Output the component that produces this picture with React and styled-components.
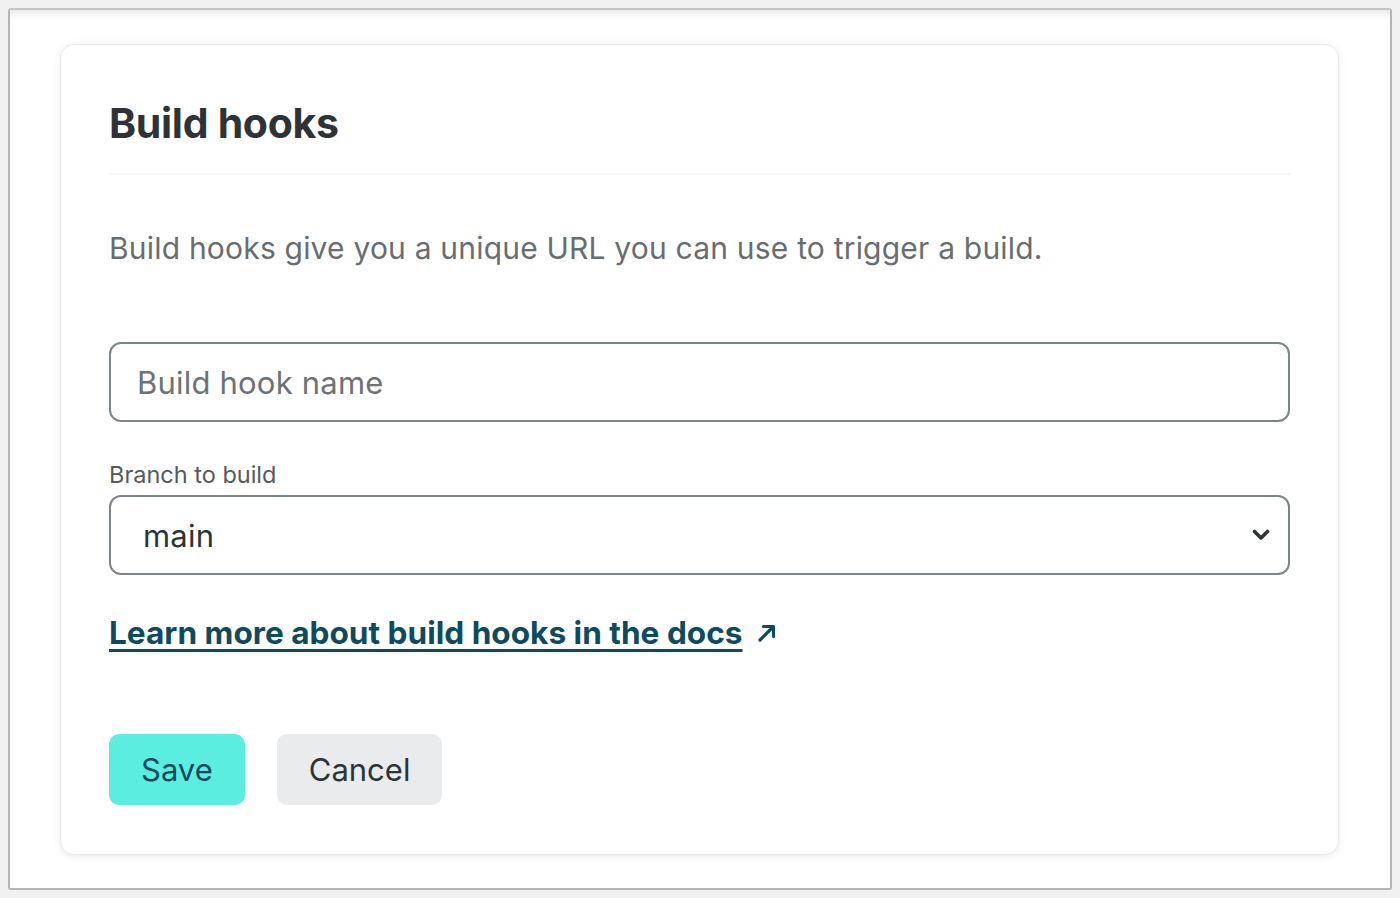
import { createGlobalStyle } from "styled-components";
import styled from "styled-components";

const GlobalStyle = createGlobalStyle`
  html, body {
    margin: 0;
    padding: 0;
    background: #f1f1f1;
  }
  body {
    font-family: Inter, "Noto Sans", "Liberation Sans", sans-serif;
    color: #2e3338;
  }
  * {
    box-sizing: border-box;
  }
`;

const Frame = styled.div`
  margin: 8px 0 0 8px;
  width: 1384px;
  height: 882px;
  background: #fff;
  border: 2px solid #b4b4b4;
  border-top-color: #c4c4c4;
  border-radius: 3px;
  box-shadow: inset 0 6px 8px -4px rgba(0, 0, 0, 0.12);
  padding: 34px 0 0 50px;
`;

const Card = styled.section`
  width: 1279px;
  height: 811px;
  background: #fff;
  border: 1px solid #e9ebeb;
  border-radius: 14px;
  box-shadow: 0 2px 6px rgba(0, 0, 0, 0.06), 0 0 14px rgba(0, 0, 0, 0.03);
  padding: 50px 48px 0 48px;
`;

const Title = styled.h2`
  margin: 0;
  font-size: 41px;
  font-weight: 700;
  line-height: 56px;
  letter-spacing: -0.3px;
  color: #2e3338;
  padding-bottom: 22px;
  border-bottom: 2px solid #f6f6f6;
`;

const Description = styled.p`
  margin: 52px 0 0;
  font-size: 30px;
  letter-spacing: 0.2px;
  line-height: 42px;
  color: #676d71;
`;

const Field = styled.div`
  display: flex;
  flex-direction: column;
  margin-top: ${(p) => p.$top}px;
`;

const Label = styled.label`
  font-size: 23.5px;
  line-height: 30px;
  color: #545a5e;
  margin-bottom: 5px;
`;

const boxStyles = `
  width: 100%;
  height: 80px;
  border: 2px solid #7d8589;
  border-radius: 12px;
  background: #fff;
  font-family: Inter, "Noto Sans", "Liberation Sans", sans-serif;
  font-size: 31px;
  letter-spacing: 0.2px;
  outline: none;
`;

const TextInput = styled.input`
  ${boxStyles}
  padding: 0 26px;
  color: #2e3338;
  &::placeholder {
    color: #6c7275;
  }
`;

const SelectBox = styled.div`
  ${boxStyles}
  display: flex;
  align-items: center;
  justify-content: space-between;
  padding: 0 18px 0 32px;
  color: #2e3338;
`;

const DocsLink = styled.a`
  display: inline-flex;
  align-items: center;
  gap: 14px;
  margin-top: 38px;
  font-size: 31.6px;
  font-weight: 700;
  color: #0e4b5e;
  text-decoration: none;
  align-self: flex-start;
`;

const LinkText = styled.span`
  text-decoration: underline;
  text-decoration-thickness: 3px;
  text-underline-offset: 5px;
`;

const Actions = styled.div`
  display: flex;
  gap: 32px;
  margin-top: 82px;
`;

const Button = styled.button`
  height: 71px;
  padding: 0 32px;
  border: none;
  border-radius: 10px;
  font-family: Inter, "Noto Sans", "Liberation Sans", sans-serif;
  font-size: 31px;
  background: ${(p) => (p.$primary ? "#5beee0" : "#e9ebec")};
  color: ${(p) => (p.$primary ? "#0e4b5e" : "#2e3338")};
  cursor: pointer;
`;

const Body = styled.div`
  display: flex;
  flex-direction: column;
`;

const Chevron = () => (
  <svg width="18" height="14" viewBox="0 0 18 14" fill="none">
    <path d="M2.5 3.5 9 10l6.5-6.5" stroke="#2e3338" strokeWidth="3.6" strokeLinecap="round" strokeLinejoin="round" />
  </svg>
);

const ArrowUpRight = () => (
  <svg width="22" height="22" viewBox="0 0 22 22" fill="none">
    <path d="M4 18 17 5M7.5 4.5h10v10" stroke="#0e4b5e" strokeWidth="3.2" strokeLinecap="round" strokeLinejoin="round" />
  </svg>
);

export default function App() {
  return (
    <>
      <GlobalStyle />
      <Frame>
        <Card>
          <Title>Build hooks</Title>
          <Body>
            <Description>Build hooks give you a unique URL you can use to trigger a build.</Description>
            <Field $top={73}>
              <TextInput placeholder="Build hook name" />
            </Field>
            <Field $top={38}>
              <Label>Branch to build</Label>
              <SelectBox>
                <span>main</span>
                <Chevron />
              </SelectBox>
            </Field>
            <DocsLink href="#">
              <LinkText>Learn more about build hooks in the docs</LinkText>
              <ArrowUpRight />
            </DocsLink>
            <Actions>
              <Button $primary>Save</Button>
              <Button>Cancel</Button>
            </Actions>
          </Body>
        </Card>
      </Frame>
    </>
  );
}
